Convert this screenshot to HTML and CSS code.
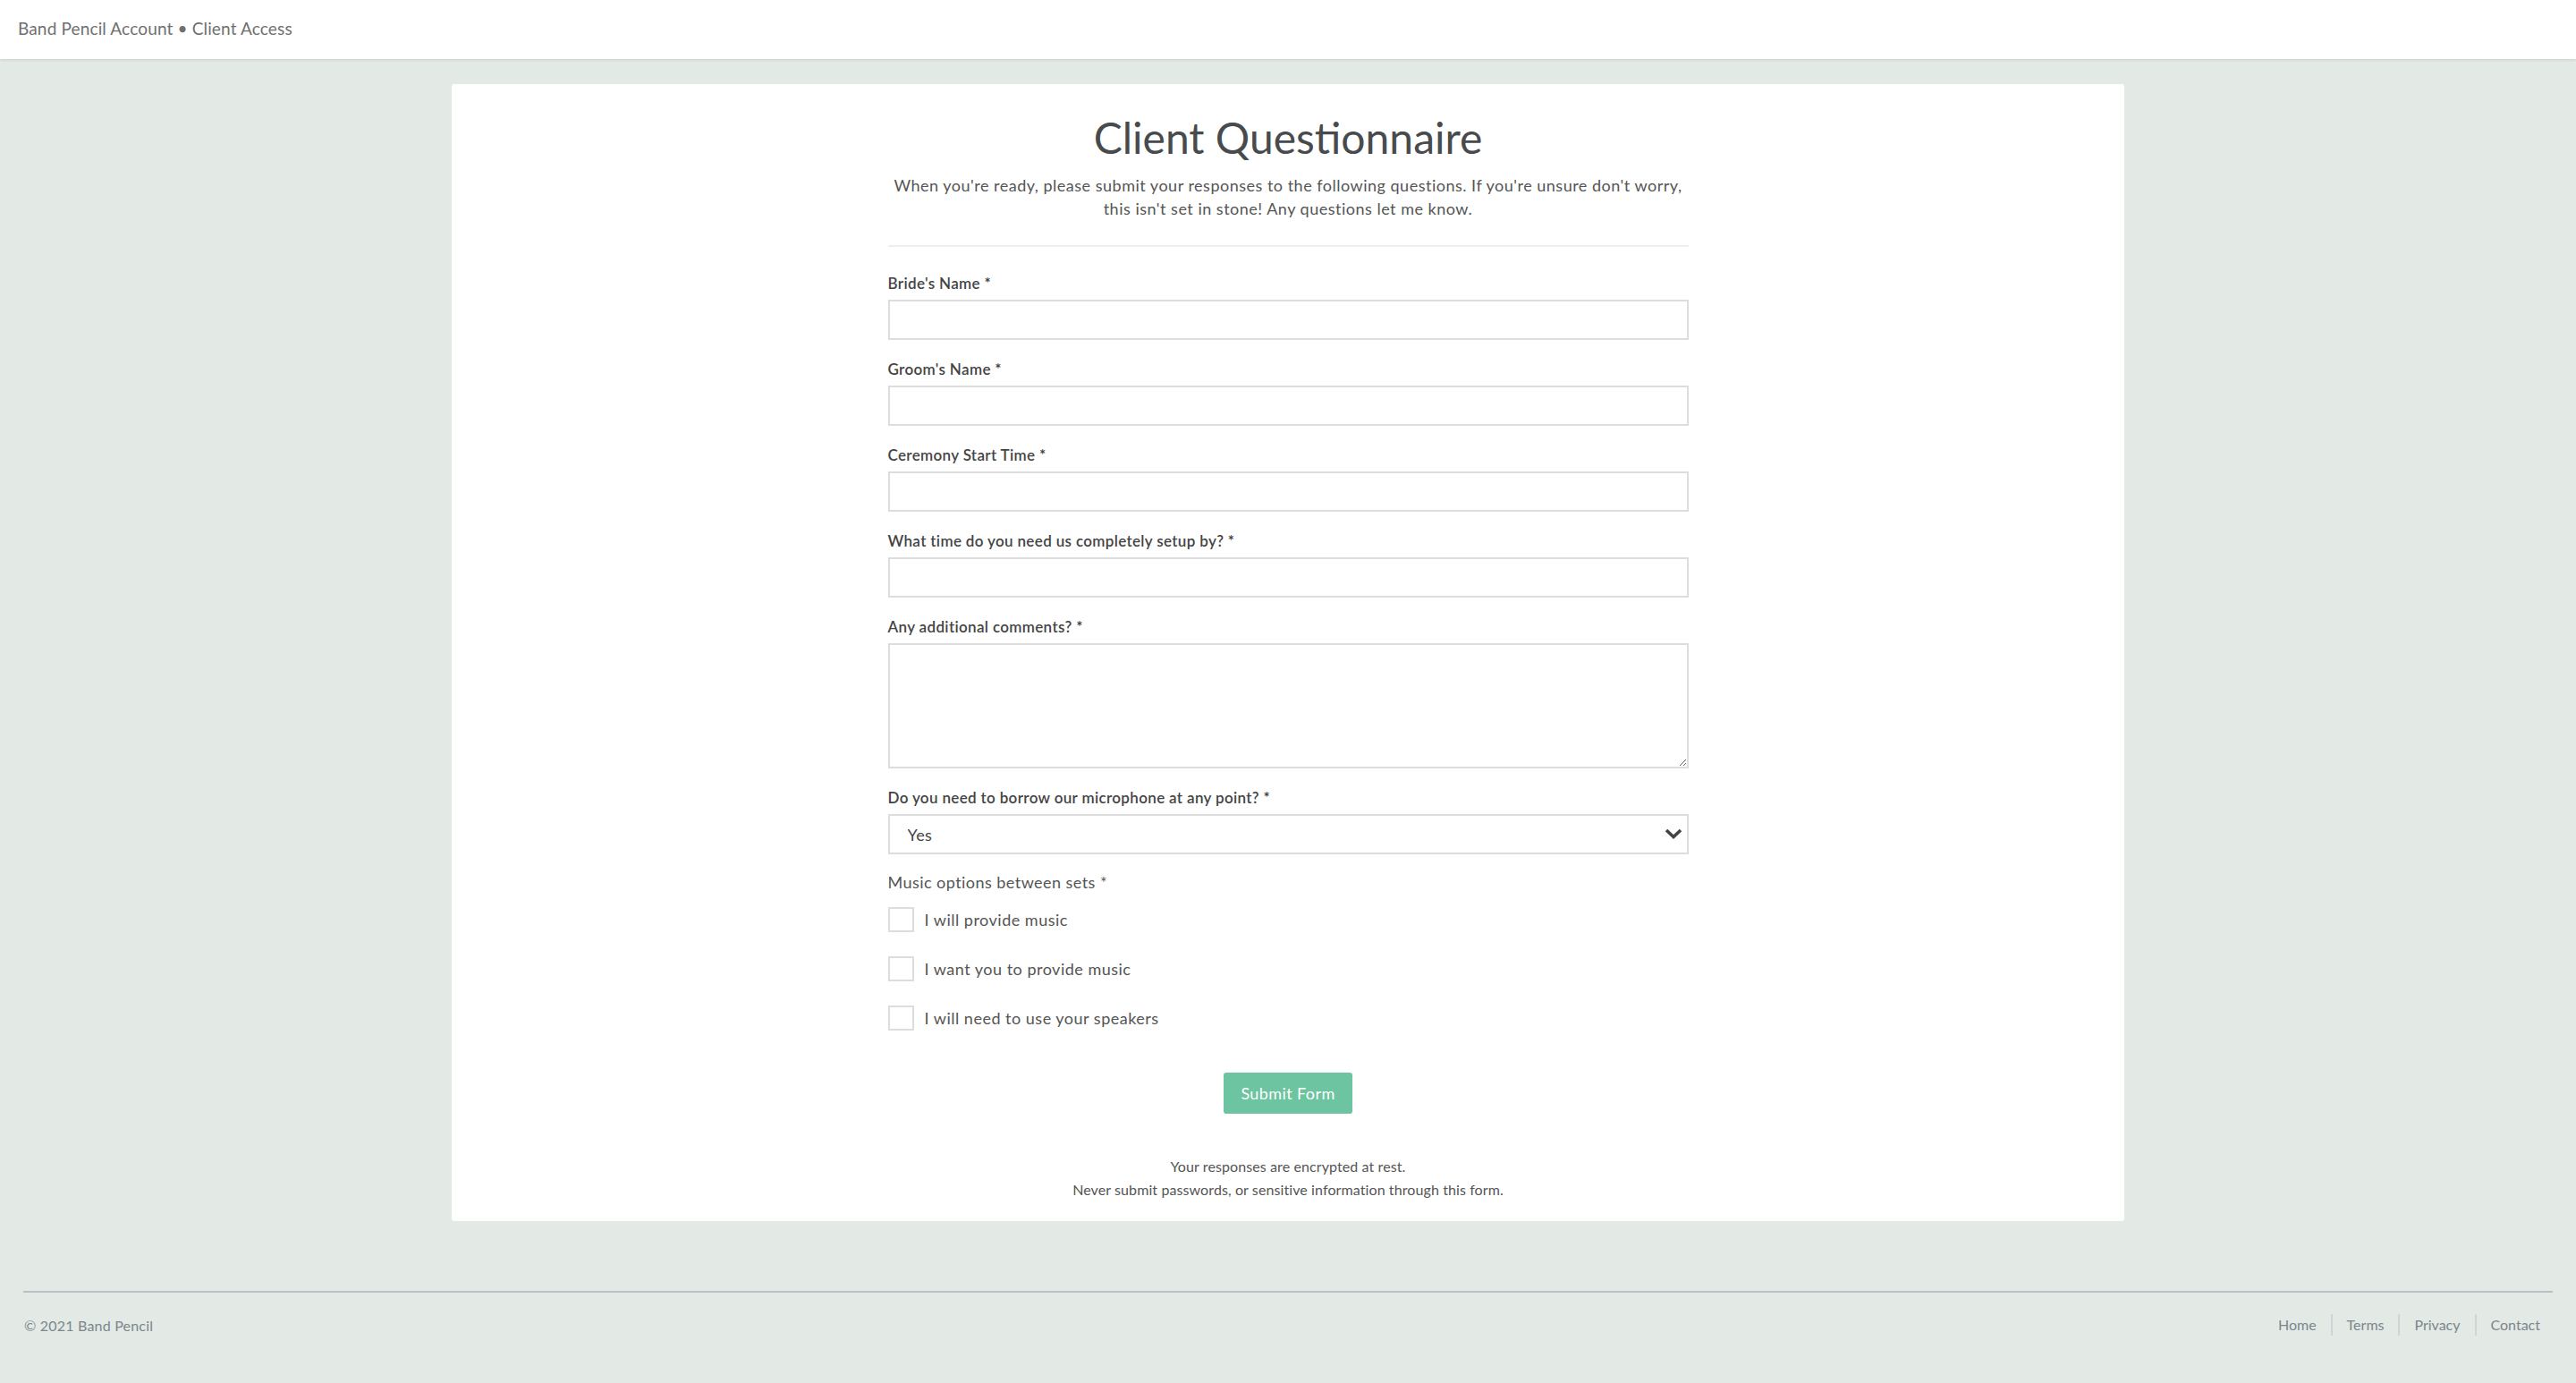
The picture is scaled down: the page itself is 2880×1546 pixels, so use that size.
FILE: index.html
```html
<!DOCTYPE html>
<html lang="en">
<head>
<meta charset="utf-8">
<title>Client Questionnaire</title>
<link rel="stylesheet" href="styles.css">
</head>
<body>
<header class="topbar">
  <span class="brand">Band Pencil Account • Client Access</span>
</header>
<main class="page">
  <section class="card">
    <h1 class="title">Client Questionnaire</h1>
    <p class="intro">When you're ready, please submit your responses to the following questions. If you're unsure don't worry,<br>this isn't set in stone! Any questions let me know.</p>
    <form class="form">
      <hr class="sep">
      <div class="field">
        <label class="label">Bride's Name *</label>
        <input class="input" type="text">
      </div>
      <div class="field">
        <label class="label">Groom's Name *</label>
        <input class="input" type="text">
      </div>
      <div class="field">
        <label class="label">Ceremony Start Time *</label>
        <input class="input" type="text">
      </div>
      <div class="field">
        <label class="label">What time do you need us completely setup by? *</label>
        <input class="input" type="text">
      </div>
      <div class="field">
        <label class="label">Any additional comments? *</label>
        <textarea class="textarea"></textarea>
      </div>
      <div class="field">
        <label class="label">Do you need to borrow our microphone at any point? *</label>
        <div class="select-wrap">
          <select class="select"><option>Yes</option><option>No</option></select>
          <svg class="chev" viewBox="0 0 20 12" width="20" height="12"><polyline points="2,2 10,9.5 18,2" fill="none" stroke="#444" stroke-width="3.6"/></svg>
        </div>
      </div>
      <div class="group">
        <div class="group-label">Music options between sets *</div>
        <label class="check"><span class="box"></span><span>I will provide music</span></label>
        <label class="check"><span class="box"></span><span>I want you to provide music</span></label>
        <label class="check"><span class="box"></span><span>I will need to use your speakers</span></label>
      </div>
      <div class="actions">
        <button class="btn" type="button">Submit Form</button>
      </div>
      <div class="notes">
        <p>Your responses are encrypted at rest.</p>
        <p>Never submit passwords, or sensitive information through this form.</p>
      </div>
    </form>
  </section>
</main>
<footer class="footer">
  <div class="footer-inner">
    <span class="copy">© 2021 Band Pencil</span>
    <nav class="links">
      <a>Home</a><a>Terms</a><a>Privacy</a><a>Contact</a>
    </nav>
  </div>
</footer>
</body>
</html>
```
FILE: styles.css
```css
* { box-sizing: border-box; }
html, body { margin: 0; padding: 0; }
body {
  background: #e3e9e5;
  font-family: "Lato", "Noto Sans", "Liberation Sans", sans-serif;
  color: #444;
  min-height: 1546px;
}
.topbar {
  height: 66px;
  background: #fff;
  display: flex;
  align-items: center;
  padding-left: 20px;
  padding-bottom: 4px;
  box-shadow: 0 1px 3px rgba(0,0,0,0.12);
}
.brand { font-size: 19px; letter-spacing: 0.15px; color: #707070; }
.page { padding-top: 28px; }
.card {
  width: 1870px;
  margin: 0 auto;
  background: #fff;
  border-radius: 3px;
  padding: 30px 0 22px;
  display: flex;
  flex-direction: column;
  align-items: center;
}
.title {
  margin: 0;
  font-size: 48px;
  line-height: 60px;
  font-weight: 400;
  color: #484b4e;
}
.intro {
  margin: 10px 0 0;
  width: 940px;
  text-align: center;
  font-size: 18px;
  line-height: 26px;
  letter-spacing: 0.5px;
  color: #555;
}
.form { width: 895px; }
.sep {
  margin: 28px 0 28px;
  border: 0;
  height: 2px;
  background: #eeeeee;
}
.field { display: flex; flex-direction: column; margin-bottom: 20px; }
.label {
  font-size: 17px;
  line-height: 25px;
  font-weight: 600;
  letter-spacing: 0.35px;
  color: #444;
  margin-bottom: 6px;
}
.input, .textarea, .select {
  width: 100%;
  border: 2px solid #dddddd;
  background: #fff;
  font-family: inherit;
  font-size: 18px;
  letter-spacing: 0.4px;
  color: #444;
  border-radius: 0;
  outline: none;
}
.input { height: 45px; }
.textarea { height: 140px; resize: vertical; display: block; }
.select-wrap { position: relative; }
.select {
  height: 45px;
  appearance: none;
  -webkit-appearance: none;
  padding: 0 20px;
}
.chev { position: absolute; right: 7px; top: 16px; pointer-events: none; }
.group {
  display: flex;
  flex-direction: column;
  gap: 27px;
  margin-top: -2px;
}
.group-label {
  font-size: 18px;
  line-height: 26px;
  letter-spacing: 0.45px;
  color: #555;
  margin-bottom: -12px;
}
.check {
  display: flex;
  align-items: center;
  gap: 12px;
  height: 28px;
  font-size: 18px;
  letter-spacing: 0.5px;
  color: #555;
}
.box {
  width: 29px;
  height: 28px;
  border: 2px solid #dddddd;
  background: #fff;
  flex: none;
}
.actions { display: flex; justify-content: center; margin-top: 47px; }
.btn {
  width: 144px;
  height: 46px;
  border: 0;
  border-radius: 3px;
  background: #6cc4a0;
  color: #fff;
  font-family: inherit;
  font-size: 18px;
  letter-spacing: 0.4px;
}
.notes { margin-top: 46px; text-align: center; }
.notes p { margin: 0; font-size: 16px; line-height: 26px; letter-spacing: 0.1px; color: #555; }
.footer { padding: 78px 26px 0; }
.footer-inner {
  border-top: 2px solid #b8c1c8;
  display: flex;
  justify-content: space-between;
  align-items: center;
  padding: 24px 0 0 1px;
}
.copy { font-size: 16px; letter-spacing: 0.2px; color: #7b868d; }
.links { display: flex; align-items: center; padding-right: 14px; }
.links a {
  font-size: 16px;
  color: #7b868d;
  padding: 0 16px;
  line-height: 24px;
  border-left: 2px solid #cfd4d6;
}
.links a:first-child { border-left: 0; }
.links a:last-child { padding-right: 0; }
```
